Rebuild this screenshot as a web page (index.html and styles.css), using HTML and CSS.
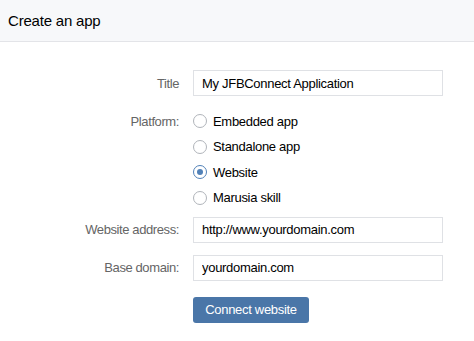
FILE: index.html
```html
<!DOCTYPE html>
<html lang="en">
<head>
    <meta charset="UTF-8">
    <meta name="viewport" content="width=device-width, initial-scale=1.0">
    <title>Create an app</title>
    <link rel="stylesheet" href="styles.css">
</head>
<body>

    <!-- page header -->
    <div class="header">Create an app</div>

    <!-- app form -->
    <form class="app-form">
        <label class="label" for="title">Title</label>
        <input class="field" id="title" type="text" value="My JFBConnect Application">

        <div class="label label-top">Platform:</div>
        <div class="radios">
            <label class="radio"><span class="dot"></span>Embedded app</label>
            <label class="radio"><span class="dot"></span>Standalone app</label>
            <label class="radio checked"><span class="dot"></span>Website</label>
            <label class="radio"><span class="dot"></span>Marusia skill</label>
        </div>

        <label class="label" for="site">Website address:</label>
        <input class="field" id="site" type="text" value="http://www.yourdomain.com">

        <label class="label" for="domain">Base domain:</label>
        <input class="field" id="domain" type="text" value="yourdomain.com">

        <div></div>
        <div><button class="button" type="button">Connect website</button></div>
    </form>

</body>
</html>
```

FILE: styles.css
```css
body {
    margin: 0;
    font-family: 'Liberation Sans', Arial, sans-serif;
    letter-spacing: -0.3px;
    background: #fff;
    color: #000;
}

/* header */
.header {
    height: 42px;
    box-sizing: border-box;
    padding: 0 8px;
    display: flex;
    align-items: center;
    background: #f7f8fa;
    border-bottom: 1px solid #e3e4e8;
    font-size: 15px;
    letter-spacing: -0.2px;
}

/* form grid */
.app-form {
    display: grid;
    grid-template-columns: 179px 250px;
    column-gap: 14px;
    row-gap: 12px;
    align-items: center;
    margin-top: 28px;
}

.label {
    text-align: right;
    font-size: 13px;
    letter-spacing: -0.4px;
    color: #656565;
}

.label-top {
    align-self: start;
    margin-top: 6px;
}

.field {
    height: 26px;
    box-sizing: border-box;
    border: 1px solid #dfe1e5;
    padding: 0 8px;
    font-family: inherit;
    font-size: 13px;
    letter-spacing: -0.3px;
    color: #000;
    outline: none;
}

/* radio list */
.radios {
    display: flex;
    flex-direction: column;
    gap: 7.5px;
    margin-top: 4px;
    margin-bottom: -2px;
}

.radio {
    display: flex;
    align-items: center;
    gap: 6px;
    font-size: 13px;
    height: 18px;
}

.dot {
    width: 12px;
    height: 12px;
    border: 1px solid #b0b4ba;
    border-radius: 50%;
    position: relative;
}

.checked .dot {
    border-color: #5181b8;
}

.checked .dot::after {
    content: '';
    position: absolute;
    top: 3px;
    left: 3px;
    width: 6px;
    height: 6px;
    border-radius: 50%;
    background: #5181b8;
}

/* button */
.button {
    height: 26px;
    width: 116px;
    margin-top: 4px;
    border: none;
    border-radius: 3px;
    background: #4a76a8;
    color: #fff;
    font-family: inherit;
    font-size: 13px;
    letter-spacing: -0.3px;
}
```
